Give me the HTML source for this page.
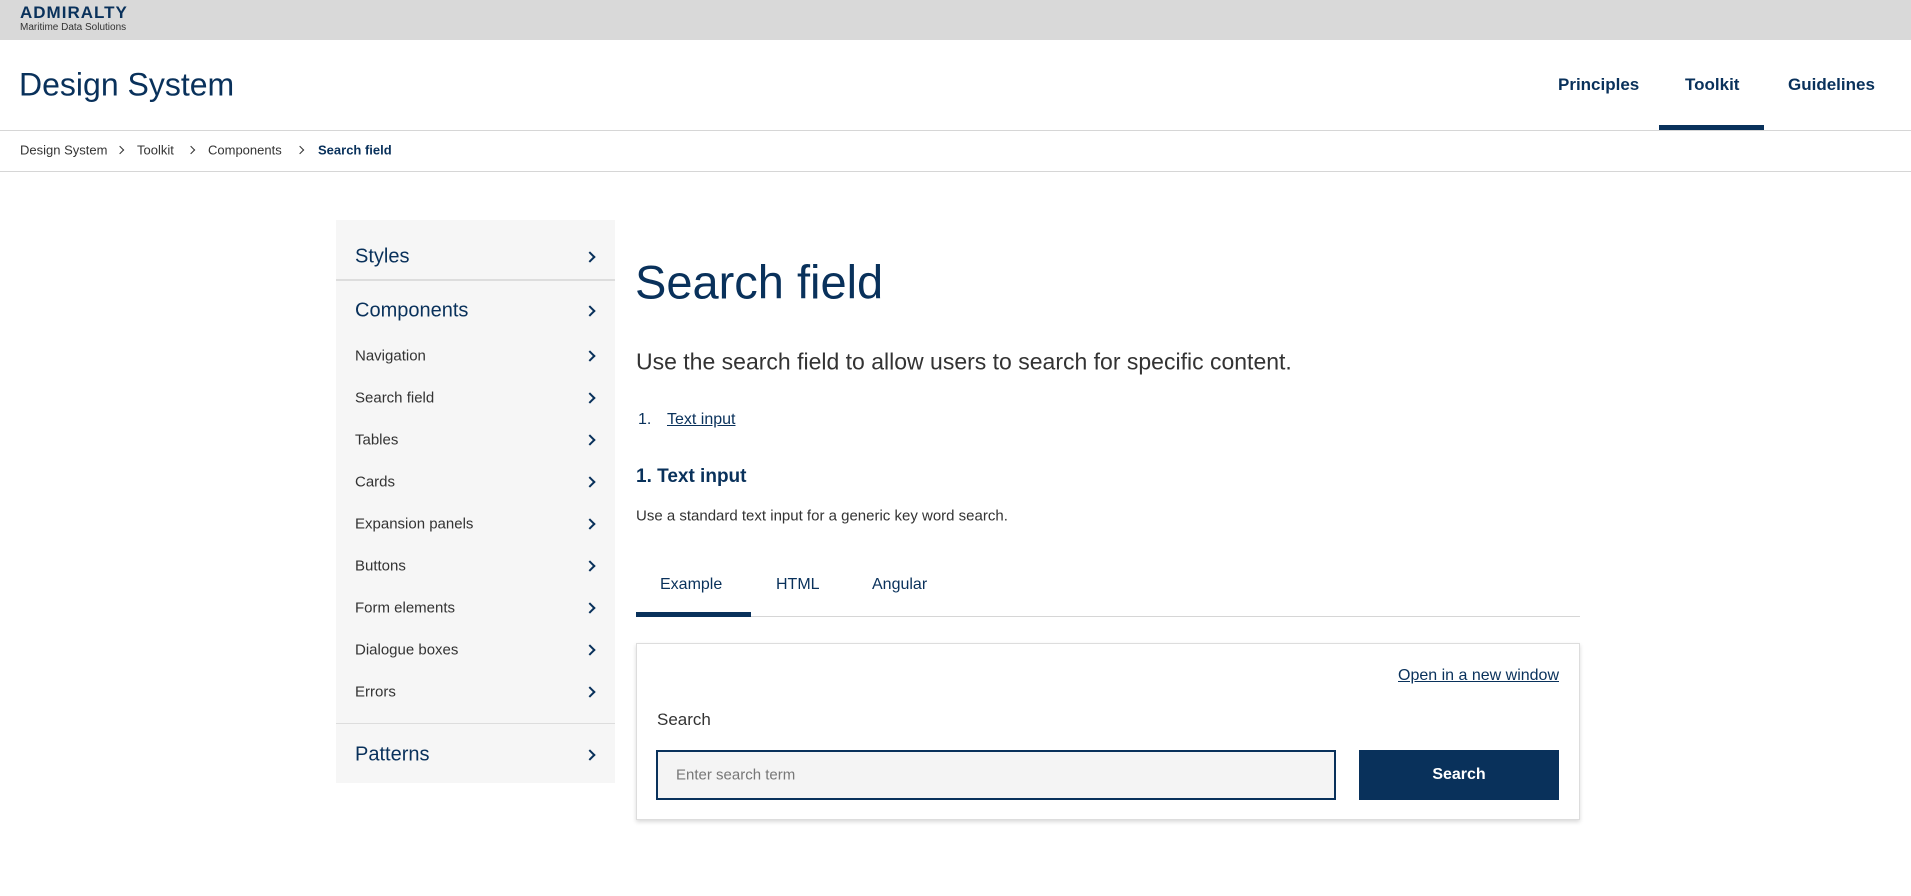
<!DOCTYPE html>
<html><head><meta charset="utf-8"><style>
*{box-sizing:border-box;margin:0;padding:0}
body{width:1911px;height:896px;overflow:hidden;background:#fff;font-family:"Liberation Sans",sans-serif;color:#09315b;position:relative}
.a{position:absolute;white-space:nowrap}
.top{position:absolute;left:0;top:0;width:1911px;height:40px;background:#d9d9d9}
.hl{position:absolute;left:0;width:1911px;height:1px;background:#d6d6d6}
.side{position:absolute;left:336px;top:220px;width:279px;height:563px;background:#f6f6f6}
.si{position:absolute;left:355px;font-size:15px;color:#333;transform:translateY(-50%)}
.sh{position:absolute;left:355px;font-size:20px;color:#09315b;transform:translateY(-50%)}
.ch{position:absolute;left:586px;width:8px;height:8px;border-right:2px solid #09315b;border-top:2px solid #09315b;transform:translateY(-50%) rotate(45deg)}
.bc{position:absolute;top:150px;transform:translateY(-50%);font-size:13px;color:#333}
.bch{position:absolute;top:150px;width:6px;height:6px;border-right:1.5px solid #333;border-top:1.5px solid #333;transform:translateY(-50%) rotate(45deg)}
.m{transform:translateY(-50%)}
</style></head><body>
<div class="top"></div>
<div class="a" style="left:20px;top:3px;font-size:17px;font-weight:bold;letter-spacing:1px;color:#09315b">ADMIRALTY</div>
<div class="a" style="left:20px;top:22px;font-size:10px;color:#333">Maritime Data Solutions</div>
<div class="a m" style="left:19px;top:85px;font-size:32px;color:#09315b">Design System</div>
<div class="a m" style="left:1558px;top:85px;font-size:17px;font-weight:bold">Principles</div>
<div class="a m" style="left:1685px;top:85px;font-size:17px;font-weight:bold">Toolkit</div>
<div class="a m" style="left:1788px;top:85px;font-size:17px;font-weight:bold">Guidelines</div>
<div class="a" style="left:1659px;top:125px;width:105px;height:5px;background:#09315b"></div>
<div class="hl" style="top:130px"></div>
<div class="bc" style="left:20px">Design System</div><div class="bch" style="left:117px"></div>
<div class="bc" style="left:137px">Toolkit</div><div class="bch" style="left:188px"></div>
<div class="bc" style="left:208px">Components</div><div class="bch" style="left:297px"></div>
<div class="bc" style="left:318px;font-weight:bold;color:#09315b">Search field</div>
<div class="hl" style="top:171px"></div>
<div class="side"></div>
<div class="sh" style="top:257px">Styles</div><div class="ch" style="top:257px"></div>
<div class="a" style="left:336px;top:279px;width:279px;height:2px;background:#ddd"></div>
<div class="sh" style="top:311px">Components</div><div class="ch" style="top:311px"></div>
<div class="si" style="top:356px">Navigation</div><div class="ch" style="top:356px"></div>
<div class="si" style="top:398px">Search field</div><div class="ch" style="top:398px"></div>
<div class="si" style="top:440px">Tables</div><div class="ch" style="top:440px"></div>
<div class="si" style="top:482px">Cards</div><div class="ch" style="top:482px"></div>
<div class="si" style="top:524px">Expansion panels</div><div class="ch" style="top:524px"></div>
<div class="si" style="top:566px">Buttons</div><div class="ch" style="top:566px"></div>
<div class="si" style="top:608px">Form elements</div><div class="ch" style="top:608px"></div>
<div class="si" style="top:650px">Dialogue boxes</div><div class="ch" style="top:650px"></div>
<div class="si" style="top:692px">Errors</div><div class="ch" style="top:692px"></div>
<div class="a" style="left:336px;top:723px;width:279px;height:1px;background:#ddd"></div>
<div class="sh" style="top:755px">Patterns</div><div class="ch" style="top:755px"></div>
<div class="a m" style="left:635px;top:282px;font-size:47px;color:#09315b">Search field</div>
<div class="a m" style="left:636px;top:362px;font-size:23px;color:#333">Use the search field to allow users to search for specific content.</div>
<div class="a m" style="left:638px;top:420px;font-size:16px;color:#09315b">1.</div>
<div class="a m" style="left:667px;top:420px;font-size:16px;color:#09315b;text-decoration:underline">Text input</div>
<div class="a m" style="left:636px;top:477px;font-size:19px;font-weight:bold;color:#09315b">1. Text input</div>
<div class="a m" style="left:636px;top:516px;font-size:15px;color:#333">Use a standard text input for a generic key word search.</div>
<div class="a m" style="left:660px;top:585px;font-size:16px">Example</div>
<div class="a m" style="left:776px;top:585px;font-size:16px">HTML</div>
<div class="a m" style="left:872px;top:585px;font-size:16px">Angular</div>
<div class="a" style="left:636px;top:616px;width:944px;height:1px;background:#d6d6d6"></div>
<div class="a" style="left:636px;top:612px;width:115px;height:5px;background:#09315b"></div>
<div class="a" style="left:636px;top:643px;width:944px;height:177px;border:1px solid #ddd;box-shadow:0 2px 4px rgba(0,0,0,.15)"></div>
<div class="a m" style="right:352px;top:676px;font-size:16px;text-decoration:underline;color:#09315b">Open in a new window</div>
<div class="a m" style="left:657px;top:720px;font-size:17px;color:#333">Search</div>
<div class="a" style="left:656px;top:750px;width:680px;height:50px;background:#f4f4f4;border:2px solid #09315b"></div>
<div class="a m" style="left:676px;top:775px;font-size:15px;color:#777">Enter search term</div>
<div class="a" style="left:1359px;top:750px;width:200px;height:50px;background:#09315b"></div>
<div class="a m" style="left:1359px;top:775px;width:200px;text-align:center;font-size:16px;font-weight:bold;color:#fff">Search</div>
</body></html>
